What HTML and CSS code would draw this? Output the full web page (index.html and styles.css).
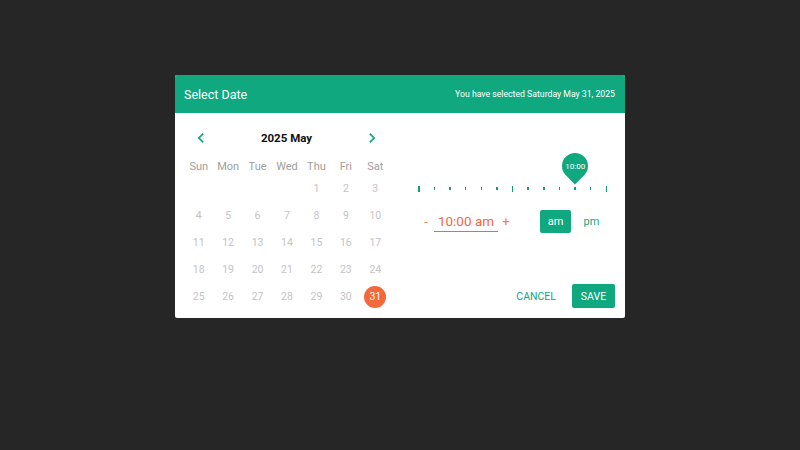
FILE: index.html
```html
<!DOCTYPE html>
<html lang="en">
<head>
    <meta charset="UTF-8">
    <meta name="viewport" content="width=device-width, initial-scale=1.0">
    <title>Select Date</title>
    <link rel="stylesheet" href="styles.css">
</head>
<body>
    <div class="picker">
        <div class="picker-header">
            <span class="picker-title">Select Date</span>
            <span class="picker-summary">You have selected Saturday May 31, 2025</span>
        </div>
        <div class="picker-body">
            <div class="calendar">
                <div class="cal-nav">
                    <button class="nav-btn">
                        <svg width="20" height="20" viewBox="0 0 24 24"><path d="M15.4 7.4L14 6l-6 6 6 6 1.4-1.4L10.8 12z" fill="currentColor"/></svg>
                    </button>
                    <span class="cal-month">2025 May</span>
                    <button class="nav-btn">
                        <svg width="20" height="20" viewBox="0 0 24 24"><path d="M8.6 16.6L10 18l6-6-6-6-1.4 1.4 4.6 4.6z" fill="currentColor"/></svg>
                    </button>
                </div>
                <div class="weekdays">
                    <span>Sun</span><span>Mon</span><span>Tue</span><span>Wed</span><span>Thu</span><span>Fri</span><span>Sat</span>
                </div>
                <div class="days" id="days"></div>
            </div>

            <div class="time-panel">
                <div class="slider">
                    <div class="pin" style="left: 83.333%"><span>10:00</span></div>
                    <div class="ticks" id="ticks"></div>
                </div>
                <div class="time-row">
                    <span class="step">-</span>
                    <span class="time-value">10:00 am</span>
                    <span class="step">+</span>
                    <div class="meridiem">
                        <button class="mer active">am</button>
                        <button class="mer">pm</button>
                    </div>
                </div>
                <div class="actions">
                    <button class="btn-text">Cancel</button>
                    <button class="btn-save">Save</button>
                </div>
            </div>
        </div>
    </div>

    <script>
        // May 2025 starts on a Thursday
        const days = document.getElementById("days");
        for (let i = 0; i < 4; i++) {
            days.appendChild(document.createElement("span"));
        }
        for (let d = 1; d <= 31; d++) {
            const cell = document.createElement("span");
            cell.className = "day" + (d === 31 ? " selected" : "");
            cell.textContent = d;
            days.appendChild(cell);
        }

        const ticks = document.getElementById("ticks");
        for (let h = 0; h <= 12; h++) {
            const t = document.createElement("i");
            if (h % 6 === 0) t.className = "major";
            ticks.appendChild(t);
        }
    </script>
</body>
</html>
```

FILE: styles.css
```css
body {
    margin: 0;
    height: 100vh;
    background-color: #262626;
    font-family: Roboto, "Liberation Sans", sans-serif;
    display: flex;
    justify-content: center;
    align-items: flex-start;
    padding-top: 75px;
    box-sizing: border-box;
}
button {
    font-family: inherit;
    border: none;
    background: none;
    padding: 0;
    cursor: pointer;
}
.picker {
    width: 450px;
    background: white;
    border-radius: 2px;
    overflow: hidden;
}
.picker-header {
    height: 38px;
    background-color: #0fa87f;
    color: white;
    display: flex;
    align-items: center;
    justify-content: space-between;
    padding: 0 10px 0 9px;
}
.picker-title {
    font-size: 12.5px;
}
.picker-summary {
    font-size: 8.7px;
}
.picker-body {
    display: flex;
    padding: 12px 10px 8px 9px;
}
.calendar {
    width: 206px;
}
.cal-nav {
    height: 26px;
    display: flex;
    align-items: center;
    justify-content: space-between;
    padding: 0 8px 0 7px;
}
.nav-btn {
    color: #0fa87f;
    display: flex;
}
.cal-month {
    font-size: 11.5px;
    font-weight: bold;
    color: #111;
}
.weekdays, .days {
    display: grid;
    grid-template-columns: repeat(7, 1fr);
    text-align: center;
}
.weekdays {
    margin-top: 7px;
    height: 17px;
    line-height: 17px;
    font-size: 11px;
    color: #9e9e9e;
}
.days span {
    height: 27px;
    display: flex;
    align-items: center;
    justify-content: center;
    font-size: 10.5px;
    color: #c4c4c4;
}
.day.selected {
    background: #f4683c;
    color: white;
    border-radius: 50%;
    width: 22px;
    height: 22px;
    margin: 2.5px auto;
}
.time-panel {
    flex: 1;
    display: flex;
    flex-direction: column;
    padding-left: 28px;
}
.slider {
    position: relative;
    margin-top: 28px;
    height: 40px;
    width: 189px;
}
.ticks {
    position: absolute;
    left: 0;
    right: 0;
    bottom: 1px;
    height: 7px;
    display: flex;
    justify-content: space-between;
    align-items: center;
}
.ticks i {
    width: 1.5px;
    height: 3px;
    background: #0f9e78;
}
.ticks i.major {
    height: 6px;
}
.pin {
    position: absolute;
    top: 0;
    width: 26px;
    height: 26px;
    margin-left: -13px;
    background: #0fa87f;
    border-radius: 50% 50% 50% 0;
    transform: rotate(-45deg);
    display: flex;
    align-items: center;
    justify-content: center;
}
.pin span {
    transform: rotate(45deg);
    color: white;
    font-size: 8px;
}
.time-row {
    margin-top: 16px;
    display: flex;
    align-items: center;
    height: 24px;
}
.step {
    color: #f08060;
    font-size: 13px;
    width: 16px;
    text-align: center;
}
.time-value {
    color: #f4683c;
    font-size: 13.5px;
    width: 64px;
    text-align: center;
    line-height: 19px;
    border-bottom: 1px solid #f4683c;
    margin-top: 2px;
}
.meridiem {
    display: flex;
    align-items: center;
    margin-left: 26px;
}
.mer {
    width: 31px;
    height: 23px;
    border-radius: 2px;
    font-size: 11px;
    color: #0fa87f;
}
.mer + .mer {
    margin-left: 5px;
}
.mer.active {
    background: #0fa87f;
    color: white;
}
.actions {
    margin-top: auto;
    margin-bottom: 2px;
    display: flex;
    justify-content: flex-end;
    align-items: center;
    gap: 8px;
}
.btn-text, .btn-save {
    height: 24px;
    font-size: 10.5px;
    text-transform: uppercase;
    padding: 0 8px;
    border-radius: 2px;
}
.btn-text {
    color: #0fa87f;
}
.btn-save {
    background: #0fa87f;
    color: white;
    width: 43px;
}
```
